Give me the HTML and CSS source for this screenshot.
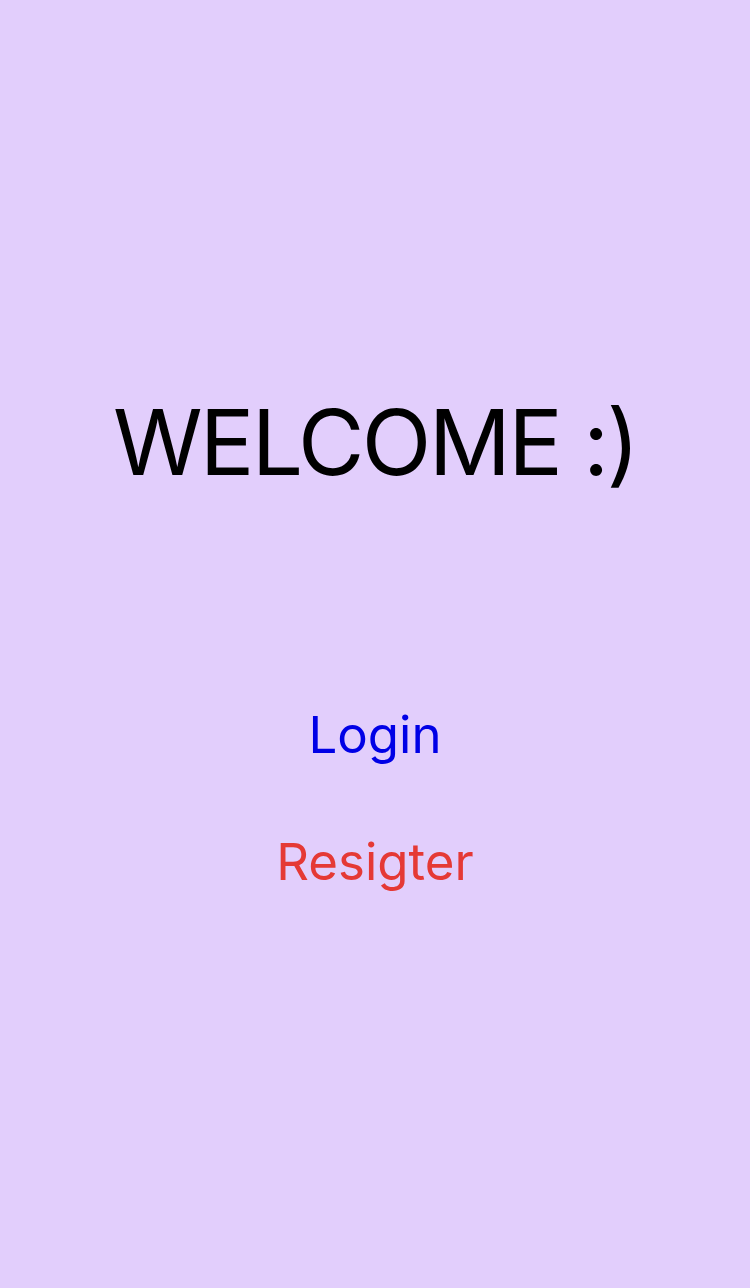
FILE: index.html
```html
<!DOCTYPE html>
<html>
<head>
<meta charset="utf-8">
<link rel="stylesheet" href="styles.css">
</head>
<body>
<main class="screen">
  <h1 class="title">WELCOME :)</h1>
  <nav class="actions">
    <a class="link login" href="#">Login</a>
    <a class="link register" href="#">Resigter</a>
  </nav>
</main>
</body>
</html>
```
FILE: styles.css
```css
html, body {
  margin: 0;
  padding: 0;
  background: #e2cefc;
}
.screen {
  width: 750px;
  height: 1288px;
  display: flex;
  flex-direction: column;
  align-items: center;
  font-family: Inter, "Noto Sans", sans-serif;
}
.title {
  margin: 392px 0 0 0;
  font-size: 91px;
  font-weight: 400;
  letter-spacing: -2.7px;
  line-height: 100px;
  color: #000;
}
.actions {
  margin-top: 210px;
  display: flex;
  flex-direction: column;
  align-items: center;
  gap: 61px;
}
.link {
  font-size: 51px;
  line-height: 66px;
  text-decoration: none;
}
.login { color: #0000e6; }
.register { color: #e53935; }
```
